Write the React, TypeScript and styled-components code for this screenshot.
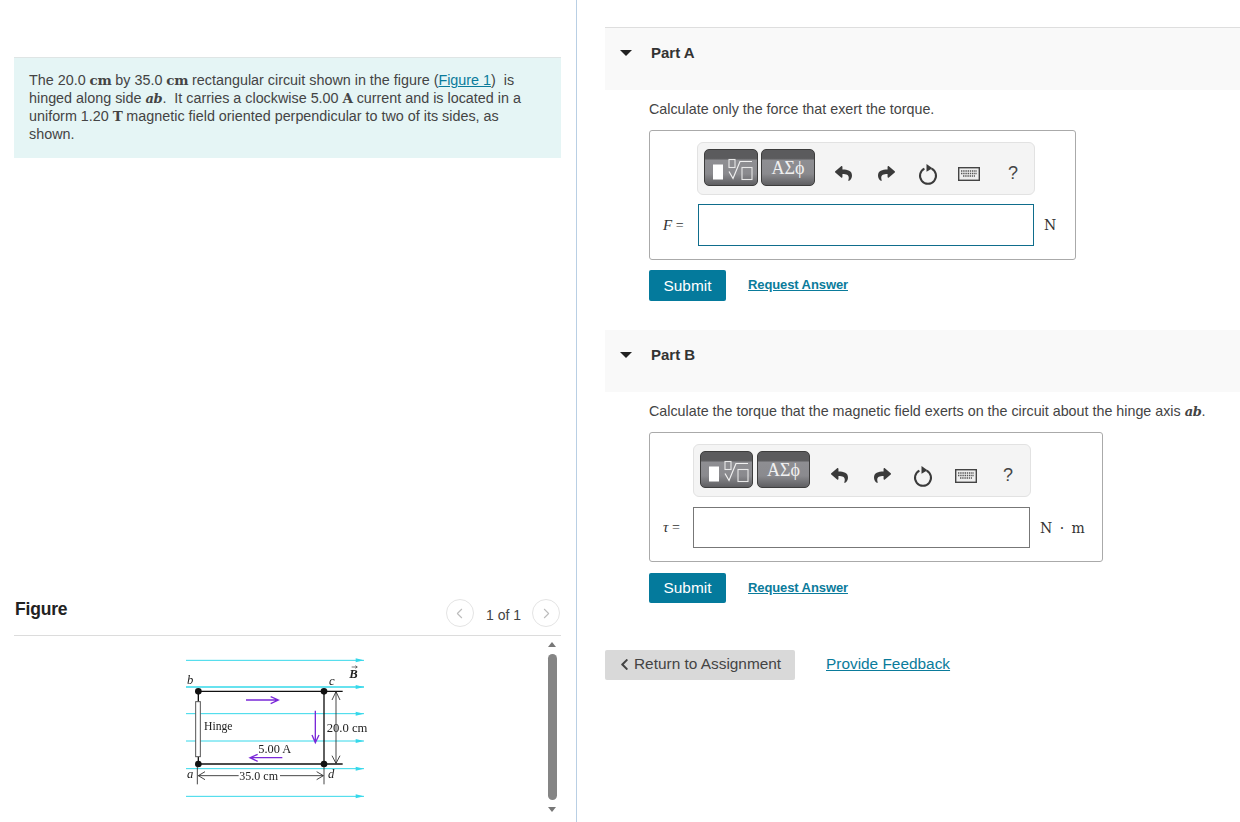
import styled, { createGlobalStyle } from "styled-components";
import { FC } from "react";
import { FaChevronLeft, FaReply, FaShare } from "react-icons/fa";
import { ChevronLeft, ChevronRight } from "lucide-react";

const GlobalStyle = createGlobalStyle`
  html, body {
    margin: 0;
    padding: 0;
    height: 100%;
    overflow: hidden;
    background: #fff;
  }
  body {
    font-family: "Liberation Sans", Arial, sans-serif;
    font-size: 14px;
    color: #3c3c3c;
  }
`;

const Page = styled.div`
  display: flex;
  width: 1240px;
  height: 822px;
  overflow: hidden;
`;

const LeftColumn = styled.div`
  box-sizing: border-box;
  width: 577px;
  height: 822px;
  flex: none;
  padding: 57px 15px 0 14px;
  border-right: 1px solid #b9cfe4;
  display: flex;
  flex-direction: column;
`;

const Statement = styled.div`
  box-sizing: border-box;
  height: 101px;
  padding: 13px 14px 0 15px;
  border-top: 1px solid #dfe5e5;
  background: #e5f5f5;
  font-size: 14.35px;
  line-height: 18px;
  color: #444;
`;

const TexRoman = styled.span`
  font-family: "DejaVu Serif", "Liberation Serif", serif;
  font-size: 13.5px;
  line-height: 1;
  font-weight: bold;
  letter-spacing: -0.4px;
`;

const TexItalic = styled.span`
  font-family: "DejaVu Serif", "Liberation Serif", serif;
  font-style: italic;
  font-weight: bold;
  font-size: 13px;
  line-height: 1;
  letter-spacing: -0.3px;
`;

const TealLink = styled.a`
  color: #0a7b9b;
  text-decoration: underline;
  cursor: pointer;
`;

const FigureHeader = styled.div`
  box-sizing: border-box;
  height: 38px;
  margin-top: 440px;
  display: flex;
  align-items: flex-start;
  justify-content: space-between;
  border-bottom: 1px solid #dcdcdc;
`;

const FigureTitle = styled.h2`
  margin: 0 0 0 1px;
  font-size: 17.5px;
  line-height: 22px;
  font-weight: bold;
  color: #222;
  letter-spacing: -0.2px;
`;

const Pager = styled.div`
  display: flex;
  align-items: center;
  gap: 12px;
  margin: 1px 1px 0 0;
  color: #444;
`;

const PagerLabel = styled.span`
  margin: 3px -1px 0 0;
`;

const PagerButton = styled.span`
  box-sizing: border-box;
  width: 28px;
  height: 28px;
  border: 1px solid #e4e4e4;
  border-radius: 50%;
  display: flex;
  align-items: center;
  justify-content: center;
  color: #bcbcbc;
`;

const FigureArea = styled.div`
  flex: 1;
  display: flex;
  justify-content: space-between;
  min-height: 0;
`;

const Diagram = styled.svg`
  width: 210px;
  height: 165px;
  margin: 9px 0 0 156px;
  filter: blur(0.4px);
`;

const ScrollTrack = styled.div`
  width: 12px;
  height: 186px;
  margin-right: 3px;
  display: flex;
  flex-direction: column;
  align-items: center;
`;

const ScrollUp = styled.div`
  margin-top: 6px;
  width: 0;
  height: 0;
  border-left: 4px solid transparent;
  border-right: 4px solid transparent;
  border-bottom: 5px solid #777;
`;

const ScrollDown = styled.div`
  margin-top: 7px;
  width: 0;
  height: 0;
  border-left: 4px solid transparent;
  border-right: 4px solid transparent;
  border-top: 5px solid #777;
`;

const ScrollThumb = styled.div`
  width: 9px;
  height: 146px;
  margin-top: 7px;
  border-radius: 5px;
  background: #858585;
`;

const RightColumn = styled.div`
  flex: 1;
  min-width: 0;
  padding: 27px 0 0 28px;
`;

const PartHeader = styled.div<{ $height: number; $top: number; $bordered?: boolean }>`
  box-sizing: border-box;
  height: ${(p) => p.$height}px;
  margin-top: ${(p) => p.$top}px;
  padding: 15px 0 0 15px;
  display: flex;
  align-items: flex-start;
  gap: 18px;
  background: #f9f9f9;
  border-top: ${(p) => (p.$bordered ? "1px solid #dedede" : "none")};
`;

const Caret = styled.span`
  width: 0;
  height: 0;
  margin-top: 7px;
  border-left: 6.5px solid transparent;
  border-right: 6.5px solid transparent;
  border-top: 6.5px solid #222;
`;

const PartTitle = styled.span`
  font-weight: bold;
  font-size: 15px;
  line-height: 20px;
  margin-left: 1px;
  color: #333;
`;

const PartBody = styled.div`
  padding-left: 44px;
`;

const Prompt = styled.p<{ $top: number }>`
  margin: ${(p) => p.$top}px 0 0;
  line-height: 18px;
  color: #444;
  font-size: 14.3px;
`;

const AnswerBox = styled.div<{ $width: number; $height: number; $top: number }>`
  box-sizing: border-box;
  width: ${(p) => p.$width}px;
  height: ${(p) => p.$height}px;
  margin-top: ${(p) => p.$top}px;
  padding: 11px 0 0;
  border: 1px solid #aaa;
  border-radius: 3px;
`;

const Toolbar = styled.div<{ $left: number; $gap: number; $icons: string }>`
  box-sizing: border-box;
  width: 338px;
  height: 53px;
  margin-left: ${(p) => p.$left}px;
  padding: 6px 0 0 6px;
  display: grid;
  grid-template-columns: ${(p) => p.$icons};
  column-gap: ${(p) => p.$gap}px;
  align-items: start;
  background: #f4f4f4;
  border: 1px solid #e2e2e2;
  border-radius: 6px;
`;

const TemplateButton = styled.button`
  box-sizing: border-box;
  width: 100%;
  height: 37px;
  padding: 2px 0 0;
  display: flex;
  align-items: center;
  justify-content: center;
  border: 1px solid #3d3d3d;
  border-radius: 5px;
  color: #f0f0f0;
  font-family: "Liberation Serif", "DejaVu Serif", serif;
  font-size: 18px;
  background: linear-gradient(#5b5b5d 0, #5b5b5d 24%, #8e8e92 30%, #8a8a8e 68%, #5f5f62 100%);
`;

const ToolIcon = styled.span`
  height: 37px;
  margin-top: 6px;
  display: flex;
  align-items: center;
  justify-content: center;
  color: #3a3a3a;
`;

const HelpMark = styled.span`
  font-size: 18px;
  color: #444;
`;

const InputRow = styled.div<{ $top: number; $left: number }>`
  display: flex;
  align-items: center;
  margin-top: ${(p) => p.$top}px;
  padding-left: ${(p) => p.$left}px;
`;

const Label = styled.span<{ $width: number }>`
  width: ${(p) => p.$width}px;
  flex: none;
  font-family: "Liberation Serif", "Times New Roman", serif;
  font-size: 14px;
  color: #333;
`;

const LabelVar = styled.i`
  font-size: 15px;
`;

const AnswerInput = styled.input<{ $border: string; $height: number; $width: number }>`
  box-sizing: border-box;
  width: ${(p) => p.$width}px;
  height: ${(p) => p.$height}px;
  padding: 0 6px;
  background: #fff;
  border: 1px solid ${(p) => p.$border};
  outline: none;
`;

const Unit = styled.span`
  margin-left: 10px;
  font-family: "DejaVu Serif", "Liberation Serif", serif;
  font-size: 14px;
  word-spacing: 3px;
  color: #333;
  white-space: pre;
`;

const Actions = styled.div<{ $top: number }>`
  display: flex;
  align-items: center;
  gap: 22px;
  margin-top: ${(p) => p.$top}px;
`;

const SubmitButton = styled.button<{ $height: number }>`
  width: 77px;
  height: ${(p) => p.$height}px;
  padding: 0;
  border: none;
  border-radius: 2px;
  background: #047a9c;
  color: #fff;
  font-family: "Liberation Sans", Arial, sans-serif;
  font-size: 15.4px;
`;

const RequestLink = styled(TealLink)`
  margin-top: -2px;
  font-size: 13px;
  font-weight: bold;
  letter-spacing: -0.1px;
`;

const Footer = styled.div`
  display: flex;
  align-items: center;
  gap: 31px;
  margin-top: 47px;
`;

const ReturnButton = styled.button`
  box-sizing: border-box;
  width: 190px;
  height: 30px;
  padding: 0 0 2px 13px;
  display: flex;
  align-items: center;
  gap: 3px;
  border: none;
  border-radius: 2px;
  background: #d9d9d9;
  color: #444;
  font-family: "Liberation Sans", Arial, sans-serif;
  font-size: 15.4px;
`;

const FeedbackLink = styled(TealLink)`
  font-size: 15.4px;
  margin-top: -3px;
`;

const FieldLine: FC<{ x1: number; y: number; x2: number }> = ({ x1, y, x2 }) => (
  <g>
    <line x1={x1} y1={y} x2={x2} y2={y} stroke="#35d8ea" strokeWidth={y === 126 ? 5 : 3} />
    <path d={`M${x2 - 25} ${y - 6} L${x2} ${y} L${x2 - 25} ${y + 6} Z`} fill="#35d8ea" />
  </g>
);

const CircuitDiagram: FC = () => (
  <Diagram viewBox="0 0 630 495">
    {[46, 126, 206, 288, 371, 454].map((y) => (
      <FieldLine key={y} x1={48} x2={582} y={y} />
    ))}
    <g stroke="#111" strokeWidth="4" fill="none">
      <path d="M85 139 H518 M85 357 H518 M462 139 V357" />
      <path d="M85 139 V170 M85 335 V357" />
    </g>
    <rect x="77" y="170" width="14" height="165" fill="#fff" stroke="#555" strokeWidth="3" />
    <g fill="#111">
      <circle cx="85" cy="139" r="10" />
      <circle cx="462" cy="139" r="10" />
      <circle cx="85" cy="357" r="10" />
      <circle cx="462" cy="357" r="10" />
    </g>
    <g stroke="#7a28d8" strokeWidth="4" fill="none">
      <path d="M228 165 H325 M302 155 L325 165 L302 176" />
      <path d="M436 197 V293 M426 270 L436 293 L447 270" />
      <path d="M337 338 H240 M263 328 L240 338 L263 349" />
    </g>
    <g stroke="#222" strokeWidth="2.5" fill="none">
      <path d="M498 140 V355 M486 165 L498 140 L510 165 M486 332 L498 355 L510 332" />
      <path d="M82 362 V418 M462 362 V418" />
      <path d="M85 392 H206 M330 392 H460 M105 380 L85 392 L105 404 M440 380 L460 392 L440 404" />
    </g>
    <g fontFamily="'Liberation Serif', serif" fill="#222">
      <text x="102" y="256" fontSize="35">Hinge</text>
      <text x="470" y="262" fontSize="38">20.0 cm</text>
      <text x="265" y="323" fontSize="37">5.00 A</text>
      <text x="208" y="405" fontSize="36">35.0 cm</text>
      <text x="51" y="118" fontSize="38" fontStyle="italic">b</text>
      <text x="477" y="120" fontSize="38" fontStyle="italic">c</text>
      <text x="51" y="398" fontSize="38" fontStyle="italic">a</text>
      <text x="474" y="398" fontSize="38" fontStyle="italic">d</text>
      <text x="538" y="100" fontSize="38" fontStyle="italic" fontWeight="bold">B</text>
    </g>
    <path d="M545 66 H561 M556 62 L562 66 L556 70" stroke="#333" strokeWidth="2" fill="none" />
  </Diagram>
);

const TemplateIcon: FC = () => (
  <svg width="46" height="32" viewBox="0 0 46 32">
    <rect x="5" y="11.5" width="10" height="15" fill="#fff" />
    <rect x="21" y="6.5" width="6" height="8" fill="none" stroke="#e8e8e8" strokeWidth="1.1" />
    <path d="M21 18.5 L25 25.5 L32 8.5 H44" fill="none" stroke="#f0f0f0" strokeWidth="1.2" />
    <rect x="34" y="14.5" width="10" height="12" fill="none" stroke="#e8e8e8" strokeWidth="1.1" />
  </svg>
);

const ResetIcon: FC = () => (
  <svg width="20" height="22" viewBox="0 0 20 22">
    <path d="M13.6 5.6 A8 8 0 1 1 6.4 5.6" fill="none" stroke="#3a3a3a" strokeWidth="2" />
    <path d="M8.5 1 L14.5 5.2 L8.5 8.8 Z" fill="#3a3a3a" />
  </svg>
);

const KeyboardIcon: FC = () => (
  <svg width="22" height="14" viewBox="0 0 22 14">
    <rect x="0.7" y="0.7" width="20.6" height="12.6" fill="#eee" stroke="#444" strokeWidth="1.4" />
    <path
      d="M3 4 H19 M3 6.5 H19 M5 9 H17"
      stroke="#555"
      strokeWidth="1.4"
      strokeDasharray="1.4 0.8"
      fill="none"
    />
  </svg>
);

const MathToolbar: FC<{ left: number; gap: number; icons: string }> = ({ left, gap, icons }) => (
  <Toolbar $left={left} $gap={gap} $icons={icons}>
    <TemplateButton>
      <TemplateIcon />
    </TemplateButton>
    <TemplateButton>ΑΣϕ</TemplateButton>
    <ToolIcon>
      <FaReply size={17} />
    </ToolIcon>
    <ToolIcon>
      <FaShare size={17} />
    </ToolIcon>
    <ToolIcon>
      <ResetIcon />
    </ToolIcon>
    <ToolIcon>
      <KeyboardIcon />
    </ToolIcon>
    <ToolIcon>
      <HelpMark>?</HelpMark>
    </ToolIcon>
  </Toolbar>
);

export default function App() {
  return (
    <Page>
      <GlobalStyle />
      <LeftColumn>
        <Statement>
          The 20.0 <TexRoman>cm</TexRoman> by 35.0 <TexRoman>cm</TexRoman> rectangular circuit shown in
          the figure (<TealLink>Figure 1</TealLink>)&nbsp; is
          <br />
          hinged along side <TexItalic>ab</TexItalic>.&nbsp; It carries a clockwise 5.00{" "}
          <TexRoman>A</TexRoman> current and is located in a
          <br />
          uniform 1.20 <TexRoman>T</TexRoman> magnetic field oriented perpendicular to two of its sides, as
          <br />
          shown.
        </Statement>
        <FigureHeader>
          <FigureTitle>Figure</FigureTitle>
          <Pager>
            <PagerButton>
              <ChevronLeft size={17} strokeWidth={1.5} />
            </PagerButton>
            <PagerLabel>1 of 1</PagerLabel>
            <PagerButton>
              <ChevronRight size={17} strokeWidth={1.5} />
            </PagerButton>
          </Pager>
        </FigureHeader>
        <FigureArea>
          <CircuitDiagram />
          <ScrollTrack>
            <ScrollUp />
            <ScrollThumb />
            <ScrollDown />
          </ScrollTrack>
        </FigureArea>
      </LeftColumn>
      <RightColumn>
        <PartHeader $height={63} $top={0} $bordered>
          <Caret />
          <PartTitle>Part A</PartTitle>
        </PartHeader>
        <PartBody>
          <Prompt $top={10}>Calculate only the force that exert the torque.</Prompt>
          <AnswerBox $width={427} $height={130} $top={12}>
            <MathToolbar left={47} gap={3} icons="54px 54px 50px 30px 48px 28px 54px" />
            <InputRow $top={9} $left={13}>
              <Label $width={35}>
                <LabelVar>F</LabelVar> =
              </Label>
              <AnswerInput $border="#0f6d8c" $height={42} $width={336} />
              <Unit>N</Unit>
            </InputRow>
          </AnswerBox>
          <Actions $top={10}>
            <SubmitButton $height={31}>Submit</SubmitButton>
            <RequestLink>Request Answer</RequestLink>
          </Actions>
        </PartBody>
        <PartHeader $height={62} $top={29}>
          <Caret />
          <PartTitle>Part B</PartTitle>
        </PartHeader>
        <PartBody>
          <Prompt $top={10}>
            Calculate the torque that the magnetic field exerts on the circuit about the hinge axis{" "}
            <TexItalic>ab</TexItalic>.
          </Prompt>
          <AnswerBox $width={454} $height={130} $top={12}>
            <MathToolbar left={43} gap={4} icons="53px 53px 50px 28px 46px 32px 44px" />
            <InputRow $top={10} $left={13}>
              <Label $width={30}>
                <LabelVar>τ</LabelVar> =
              </Label>
              <AnswerInput $border="#777" $height={41} $width={337} />
              <Unit>{"N · m"}</Unit>
            </InputRow>
          </AnswerBox>
          <Actions $top={11}>
            <SubmitButton $height={30}>Submit</SubmitButton>
            <RequestLink>Request Answer</RequestLink>
          </Actions>
        </PartBody>
        <Footer>
          <ReturnButton>
            <FaChevronLeft size={13} />
            Return to Assignment
          </ReturnButton>
          <FeedbackLink>Provide Feedback</FeedbackLink>
        </Footer>
      </RightColumn>
    </Page>
  );
}
